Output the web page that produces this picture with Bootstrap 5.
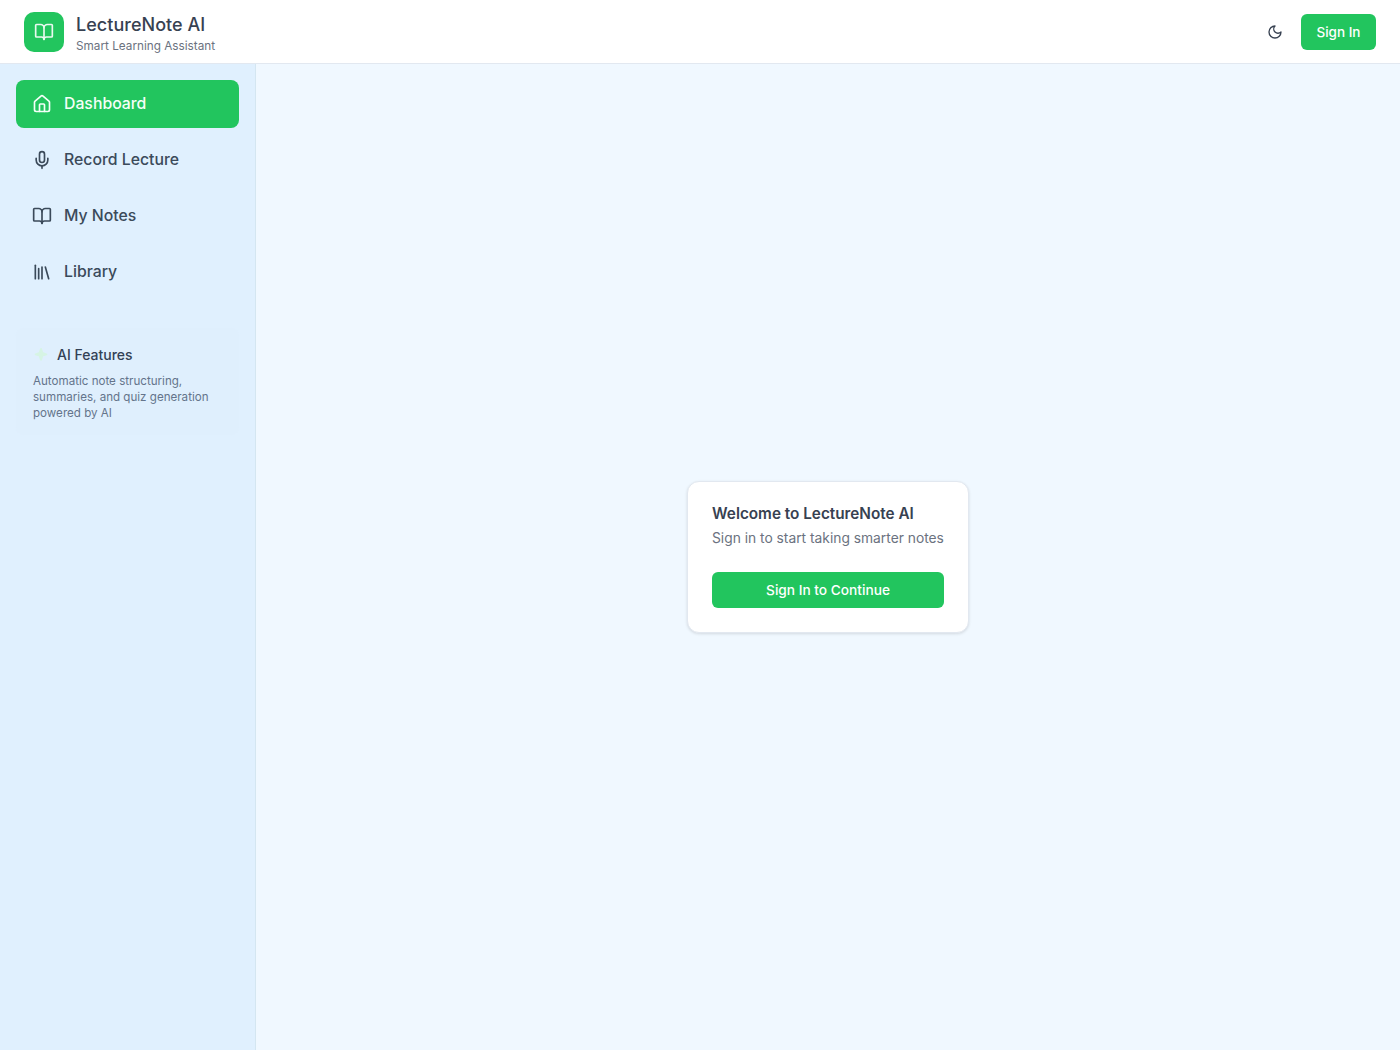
<!DOCTYPE html>
<html lang="en">
<head>
<meta charset="utf-8">
<title>LectureNote AI</title>
<link href="https://cdn.jsdelivr.net/npm/bootstrap@5.3.0/dist/css/bootstrap.min.css" rel="stylesheet">
<style>
html,body{height:100%}
body{font-family:"Inter","Noto Sans",sans-serif;background:#f0f8ff;color:#374151;overflow:hidden}
.app-head{height:64px;background:#fff;border-bottom:1px solid #e2e8f0;padding:0 24px}
.brand{gap:12px}
.logo{width:40px;height:40px;background:#22c55e;border-radius:10px}
.brand-name{font-size:18px;font-weight:500;line-height:24px;color:#374151;margin-top:4px;letter-spacing:.03px}
.brand-sub{font-size:11.75px;line-height:18px;color:#6b7280}
.theme-btn{width:36px;height:36px;background:none;border:0;padding:0;color:#374151}
.btn-go{background:#22c55e;border:0;color:#fff;font-weight:500;border-radius:6px}
.btn-go:hover{background:#22c55e;color:#fff}
.btn-head{width:75px;height:36px;padding:1px 0 0;font-size:13.5px}
.shell{height:986px}
.side{width:256px;background:#e0f0fe;border-right:1px solid #d4e6f1;padding:16px}
.side-link{height:48px;padding:0 16px;gap:12px;border-radius:8px;color:#3b4a5a;font-size:15.8px;font-weight:450;text-decoration:none;margin-bottom:8px}
.side-link:hover{color:#3b4a5a}
.side-link.on,.side-link.on:hover{background:#22c55e;color:#f4fff8}
.feat{margin-top:24px;padding:16px 17px 14px;border-radius:8px;background:#dfeffd;box-shadow:0 0 2px #dfeffd}
.feat-title{font-size:14px;font-weight:500;color:#334155;line-height:22px;margin-bottom:7px;gap:8px}
.feat-dot{width:16px;height:16px;color:#d6f4e4}
.feat-text{font-size:11.6px;line-height:16px;color:#64748b;margin:0}
.main{background:#f0f8ff}
.welcome{width:282px;height:152px;background:#fff;border:1px solid #e2e8f0;border-radius:12px;box-shadow:0 1px 3px rgba(0,0,0,.12);padding:24px}
.welcome h2{font-size:15.3px;font-weight:600;line-height:16px;color:#374151;margin:0 0 6px;white-space:nowrap}
.welcome p{font-size:13.8px;line-height:20px;color:#6b7280;margin:0 0 24px;white-space:nowrap}
.btn-wide{width:232px;height:36px;padding:0;font-size:13.7px}
</style>
</head>
<body>
<header class="app-head d-flex align-items-center justify-content-between">
  <div class="d-flex align-items-center brand">
    <div class="logo d-flex align-items-center justify-content-center">
      <svg width="20" height="20" viewBox="0 0 24 24" fill="none" stroke="#fff" stroke-width="2" stroke-linecap="round" stroke-linejoin="round" opacity=".9"><path d="M12 7v14"/><path d="M3 18a1 1 0 0 1-1-1V4a1 1 0 0 1 1-1h5a4 4 0 0 1 4 4 4 4 0 0 1 4-4h5a1 1 0 0 1 1 1v13a1 1 0 0 1-1 1h-6a3 3 0 0 0-3 3 3 3 0 0 0-3-3z"/></svg>
    </div>
    <div>
      <div class="brand-name">LectureNote AI</div>
      <div class="brand-sub">Smart Learning Assistant</div>
    </div>
  </div>
  <div class="d-flex align-items-center gap-2">
    <button class="theme-btn d-flex align-items-center justify-content-center" aria-label="Theme">
      <svg width="16" height="16" viewBox="0 0 24 24" fill="none" stroke="currentColor" stroke-width="2" stroke-linecap="round" stroke-linejoin="round"><path d="M12 3a6 6 0 0 0 9 9 9 9 0 1 1-9-9Z"/></svg>
    </button>
    <button class="btn btn-go btn-head">Sign In</button>
  </div>
</header>
<div class="shell d-flex">
  <aside class="side flex-shrink-0">
    <nav class="d-flex flex-column">
      <a class="side-link on d-flex align-items-center" href="#">
        <svg width="20" height="20" viewBox="0 0 24 24" fill="none" stroke="currentColor" stroke-width="2" stroke-linecap="round" stroke-linejoin="round"><path d="M15 21v-8a1 1 0 0 0-1-1h-4a1 1 0 0 0-1 1v8"/><path d="M3 10a2 2 0 0 1 .709-1.528l7-5.999a2 2 0 0 1 2.582 0l7 5.999A2 2 0 0 1 21 10v9a2 2 0 0 1-2 2H5a2 2 0 0 1-2-2z"/></svg>
        Dashboard</a>
      <a class="side-link d-flex align-items-center" href="#">
        <svg width="20" height="20" viewBox="0 0 24 24" fill="none" stroke="currentColor" stroke-width="2" stroke-linecap="round" stroke-linejoin="round"><path d="M12 2a3 3 0 0 0-3 3v7a3 3 0 0 0 6 0V5a3 3 0 0 0-3-3Z"/><path d="M19 10v2a7 7 0 0 1-14 0v-2"/><line x1="12" x2="12" y1="19" y2="22"/></svg>
        Record Lecture</a>
      <a class="side-link d-flex align-items-center" href="#">
        <svg width="20" height="20" viewBox="0 0 24 24" fill="none" stroke="currentColor" stroke-width="2" stroke-linecap="round" stroke-linejoin="round"><path d="M12 7v14"/><path d="M3 18a1 1 0 0 1-1-1V4a1 1 0 0 1 1-1h5a4 4 0 0 1 4 4 4 4 0 0 1 4-4h5a1 1 0 0 1 1 1v13a1 1 0 0 1-1 1h-6a3 3 0 0 0-3 3 3 3 0 0 0-3-3z"/></svg>
        My Notes</a>
      <a class="side-link d-flex align-items-center" href="#">
        <svg width="20" height="20" viewBox="0 0 24 24" fill="none" stroke="currentColor" stroke-width="2" stroke-linecap="round" stroke-linejoin="round"><path d="m16 6 4 14"/><path d="M12 6v14"/><path d="M8 8v12"/><path d="M4 4v16"/></svg>
        Library</a>
    </nav>
    <div class="feat">
      <div class="feat-title d-flex align-items-center">
        <svg class="feat-dot" viewBox="0 0 24 24" fill="currentColor" stroke="currentColor" stroke-width="3" stroke-linecap="round" stroke-linejoin="round"><path d="M12 3l2 6 6 2-6 2-2 6-2-6-6-2 6-2z"/></svg>
        AI Features</div>
      <p class="feat-text">Automatic note structuring, summaries, and quiz generation powered by AI</p>
    </div>
  </aside>
  <main class="main flex-grow-1 d-flex align-items-center justify-content-center">
    <div class="welcome">
      <h2>Welcome to LectureNote AI</h2>
      <p>Sign in to start taking smarter notes</p>
      <button class="btn btn-go btn-wide">Sign In to Continue</button>
    </div>
  </main>
</div>
<script src="https://cdn.jsdelivr.net/npm/bootstrap@5.3.0/dist/js/bootstrap.bundle.min.js"></script>
</body>
</html>
